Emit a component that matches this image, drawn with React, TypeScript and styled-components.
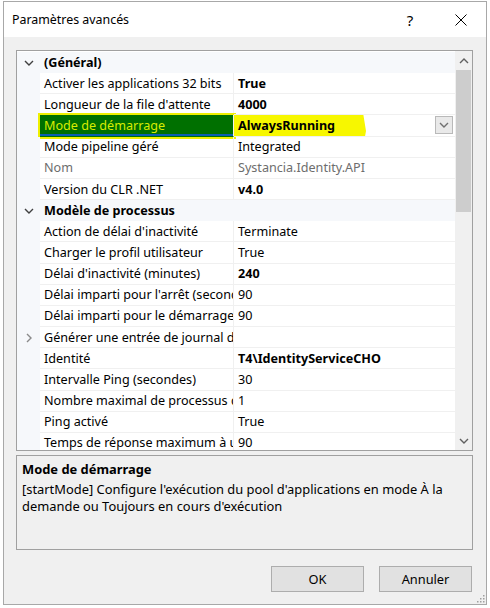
import styled, { createGlobalStyle } from "styled-components";

const GlobalStyle = createGlobalStyle`
  html, body {
    margin: 0;
    padding: 0;
    background: #ffffff;
  }
  body {
    font-family: "Noto Sans", "Open Sans", sans-serif;
    font-size: 12.6px;
    color: #000;
  }
`;

const ROW_H = 21.17;

const Window = styled.div`
  margin: 1px 0 0 3px;
  width: 484px;
  height: 604px;
  box-sizing: border-box;
  border: 1px solid #a8a8a8;
  display: flex;
  flex-direction: column;
  background: #fff;
`;

const TitleBar = styled.div`
  height: 35px;
  display: flex;
  align-items: center;
  padding-left: 8px;
  background: #fff;
`;

const Title = styled.div`
  flex: 1;
  font-size: 12.4px;
`;

const TitleButton = styled.div<{ $w: number }>`
  width: ${({ $w }) => $w}px;
  height: 35px;
  display: flex;
  align-items: center;
  justify-content: center;
  font-size: 15px;
`;

const Client = styled.div`
  flex: 1;
  background: #f0f0f0;
  padding: 13px 13px 0 12px;
  display: flex;
  flex-direction: column;
  position: relative;
`;

const Grid = styled.div`
  height: 401px;
  box-sizing: border-box;
  border: 1px solid #a0a0a0;
  background: #fff;
  display: flex;
`;

const Rows = styled.div`
  flex: 1;
  overflow: hidden;
  padding-top: 1px;
`;

const Row = styled.div`
  height: ${ROW_H}px;
  display: flex;
  align-items: stretch;
`;

const Margin = styled.div`
  width: 23px;
  flex: none;
  background: #f6f8fb;
  display: flex;
  align-items: center;
  justify-content: center;
`;

const CategoryLabel = styled.div`
  flex: 1;
  background: #f6f8fb;
  font-weight: 700;
  display: flex;
  align-items: center;
  padding-left: 4px;
`;

const Cell = styled.div<{ $bold?: boolean; $disabled?: boolean }>`
  box-sizing: border-box;
  display: flex;
  align-items: center;
  white-space: nowrap;
  overflow: hidden;
  border-bottom: 1px solid #f0f0f0;
  font-weight: ${({ $bold }) => ($bold ? 700 : 400)};
  color: ${({ $disabled }) => ($disabled ? "#6d6d6d" : "#000")};
`;

const NameCell = styled(Cell)<{ $selected?: boolean }>`
  width: 194px;
  flex: none;
  padding-left: 4px;
  border-right: 1px solid #f0f0f0;
  ${({ $selected }) =>
    $selected &&
    `
    background: #007000;
    color: #d8ec00;
    box-shadow: inset 0 -3px 0 -1px #0b5fb0;
    border-bottom-color: #007000;
    outline: 2px solid #eef000;
  `}
`;

const ValueCell = styled(Cell)`
  flex: 1;
  padding-left: 4px;
  position: relative;
`;

const Marker = styled.span`
  position: absolute;
  left: -2px;
  top: -2px;
  width: 134px;
  height: 25px;
  background: #f7f700;
  clip-path: polygon(0 0, 98% 4%, 100% 70%, 99% 100%, 30% 92%, 0 96%);
`;

const ValueText = styled.span`
  position: relative;
`;

const DropButton = styled.div`
  position: absolute;
  right: 2px;
  top: 1px;
  width: 18px;
  height: 18px;
  box-sizing: border-box;
  border: 1px solid #b9b9b9;
  background: #e9e9e9;
  display: flex;
  align-items: center;
  justify-content: center;
`;

const Scrollbar = styled.div`
  width: 17px;
  flex: none;
  background: #f0f0f0;
  display: flex;
  flex-direction: column;
  align-items: center;
`;

const ScrollArrow = styled.div`
  height: 19px;
  width: 17px;
  display: flex;
  align-items: center;
  justify-content: center;
`;

const Track = styled.div`
  flex: 1;
  width: 100%;
  display: flex;
  justify-content: center;
`;

const Thumb = styled.div`
  width: 15px;
  height: 142px;
  background: #cdcdcd;
`;

const Description = styled.div`
  margin-top: 4px;
  height: 95px;
  box-sizing: border-box;
  border: 1px solid #a0a0a0;
  padding: 4px 5px;
  font-size: 12.9px;
`;

const DescTitle = styled.div`
  font-weight: 700;
  line-height: 18px;
`;

const DescText = styled.div`
  line-height: 17px;
  margin-top: 3px;
`;

const Footer = styled.div`
  display: flex;
  justify-content: flex-end;
  gap: 15px;
  margin-top: 16px;
  padding-right: 1px;
`;

const Button = styled.button`
  width: 93px;
  height: 26px;
  box-sizing: border-box;
  border: 1px solid #adadad;
  background: #e1e1e1;
  font-family: inherit;
  font-size: 12.8px;
  color: #000;
  padding: 0;
`;

const Grip = styled.svg`
  position: absolute;
  right: 1px;
  bottom: 1px;
`;

type Item =
  | { kind: "cat"; label: string }
  | {
      kind: "prop";
      name: string;
      value: string;
      bold?: boolean;
      disabled?: boolean;
      expandable?: boolean;
      selected?: boolean;
    };

const ITEMS: Item[] = [
  { kind: "cat", label: "(Général)" },
  { kind: "prop", name: "Activer les applications 32 bits", value: "True", bold: true },
  { kind: "prop", name: "Longueur de la file d'attente", value: "4000", bold: true },
  { kind: "prop", name: "Mode de démarrage", value: "AlwaysRunning", bold: true, selected: true },
  { kind: "prop", name: "Mode pipeline géré", value: "Integrated" },
  { kind: "prop", name: "Nom", value: "Systancia.Identity.API", disabled: true },
  { kind: "prop", name: "Version du CLR .NET", value: "v4.0", bold: true },
  { kind: "cat", label: "Modèle de processus" },
  { kind: "prop", name: "Action de délai d'inactivité", value: "Terminate" },
  { kind: "prop", name: "Charger le profil utilisateur", value: "True" },
  { kind: "prop", name: "Délai d'inactivité (minutes)", value: "240", bold: true },
  { kind: "prop", name: "Délai imparti pour l'arrêt (secondes)", value: "90" },
  { kind: "prop", name: "Délai imparti pour le démarrage (secondes)", value: "90" },
  { kind: "prop", name: "Générer une entrée de journal des événements", value: "", expandable: true },
  { kind: "prop", name: "Identité", value: "T4\\IdentityServiceCHO", bold: true },
  { kind: "prop", name: "Intervalle Ping (secondes)", value: "30" },
  { kind: "prop", name: "Nombre maximal de processus de travail", value: "1" },
  { kind: "prop", name: "Ping activé", value: "True" },
  { kind: "prop", name: "Temps de réponse maximum à un ping (secondes)", value: "90" },
];

function Chevron({ dir, color = "#404040" }: { dir: "down" | "right" | "up"; color?: string }) {
  const points =
    dir === "down" ? "1,3 5,7 9,3" : dir === "up" ? "1,7 5,3 9,7" : "3,1 7,5 3,9";
  return (
    <svg width="10" height="10" viewBox="0 0 10 10">
      <polyline points={points} fill="none" stroke={color} strokeWidth="1.4" />
    </svg>
  );
}

function PropertyRow({ item }: { item: Item }) {
  if (item.kind === "cat") {
    return (
      <Row>
        <Margin>
          <Chevron dir="down" />
        </Margin>
        <CategoryLabel>{item.label}</CategoryLabel>
      </Row>
    );
  }
  return (
    <Row>
      <Margin>{item.expandable && <Chevron dir="right" color="#8a8a8a" />}</Margin>
      <NameCell $disabled={item.disabled} $selected={item.selected}>
        {item.name}
      </NameCell>
      <ValueCell $bold={item.bold} $disabled={item.disabled}>
        {item.selected && <Marker />}
        <ValueText>{item.value}</ValueText>
        {item.selected && (
          <DropButton>
            <Chevron dir="down" color="#707070" />
          </DropButton>
        )}
      </ValueCell>
    </Row>
  );
}

export default function App() {
  return (
    <>
      <GlobalStyle />
      <Window>
        <TitleBar>
          <Title>Paramètres avancés</Title>
          <TitleButton $w={52}>?</TitleButton>
          <TitleButton $w={50}>
            <svg width="12" height="12" viewBox="0 0 12 12">
              <path d="M0.5 0.5 L11.5 11.5 M11.5 0.5 L0.5 11.5" stroke="#000" strokeWidth="1" />
            </svg>
          </TitleButton>
        </TitleBar>
        <Client>
          <Grid>
            <Rows>
              {ITEMS.map((item, i) => (
                <PropertyRow key={i} item={item} />
              ))}
            </Rows>
            <Scrollbar>
              <ScrollArrow>
                <Chevron dir="up" color="#606060" />
              </ScrollArrow>
              <Track>
                <Thumb />
              </Track>
              <ScrollArrow>
                <Chevron dir="down" color="#606060" />
              </ScrollArrow>
            </Scrollbar>
          </Grid>
          <Description>
            <DescTitle>Mode de démarrage</DescTitle>
            <DescText>
              [startMode] Configure l'exécution du pool d'applications en mode À la
              <br />
              demande ou Toujours en cours d'exécution
            </DescText>
          </Description>
          <Footer>
            <Button>OK</Button>
            <Button>Annuler</Button>
          </Footer>
          <Grip width="10" height="10" viewBox="0 0 10 10">
            {[
              [8, 2],
              [8, 5],
              [5, 5],
              [8, 8],
              [5, 8],
              [2, 8],
            ].map(([x, y], i) => (
              <rect key={i} x={x} y={y} width="1.5" height="1.5" fill="#a0a0a0" />
            ))}
          </Grip>
        </Client>
      </Window>
    </>
  );
}
